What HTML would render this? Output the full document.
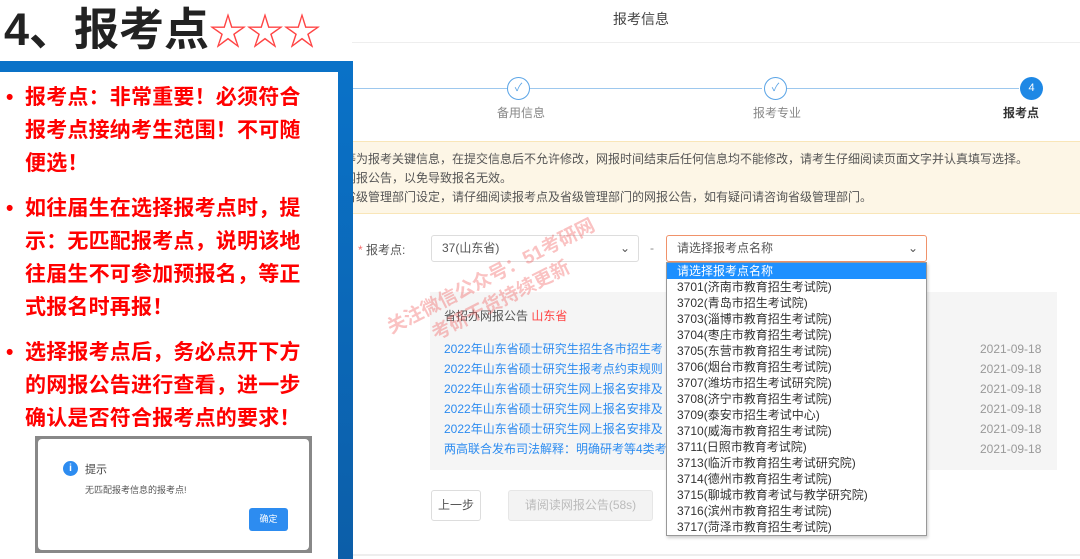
<!DOCTYPE html>
<html><head><meta charset="utf-8"><style>
*{margin:0;padding:0;box-sizing:border-box}
body{width:1080px;height:559px;overflow:hidden;background:#fff;position:relative;font-family:"Liberation Sans","Noto Sans CJK SC",sans-serif;color:#333}
.a{position:absolute;white-space:nowrap}
.f12{font-size:12px}
.red{color:#f00;font-weight:bold;font-size:21px;letter-spacing:0.2px;line-height:33px}
.dd div{height:16px;line-height:16px;padding-left:10px;font-size:12px;color:#333}
.lk{color:#2d8cf0;font-size:12px}
.dt{color:#999;font-size:12px}
</style></head><body>
<!-- right page -->
<div class="a" style="left:613px;top:9px;font-size:14px;color:#444">报考信息</div>
<div class="a" style="left:350px;top:42px;width:730px;height:1px;background:#eee"></div>
<div class="a" style="left:352px;top:88px;width:155px;height:1px;background:#9dc8ee"></div>
<div class="a" style="left:530px;top:88px;width:232px;height:1px;background:#9dc8ee"></div>
<div class="a" style="left:787px;top:88px;width:232px;height:1px;background:#9dc8ee"></div>
<div class="a" style="left:507px;top:77px;width:23px;height:23px;border:1px solid #5aa4e6;border-radius:50%;color:#5aa4e6;font-size:11px;text-align:center;line-height:21px">✓</div>
<div class="a" style="left:764px;top:77px;width:23px;height:23px;border:1px solid #5aa4e6;border-radius:50%;color:#5aa4e6;font-size:11px;text-align:center;line-height:21px">✓</div>
<div class="a" style="left:1020px;top:77px;width:23px;height:23px;background:#1e88e5;border-radius:50%;color:#fff;font-size:11px;text-align:center;line-height:23px">4</div>
<div class="a f12" style="left:497px;top:104px;color:#888">备用信息</div>
<div class="a f12" style="left:753px;top:104px;color:#888">报考专业</div>
<div class="a f12" style="left:1003px;top:104px;color:#333;font-weight:bold">报考点</div>
<div class="a" style="left:345px;top:141px;width:735px;height:73px;background:#fdf6e6;border-top:1px solid #f9e6b8;border-bottom:1px solid #f9e6b8"></div>
<div class="a f12" style="left:344px;top:150px;color:#555;line-height:19px">等为报考关键信息，在提交信息后不允许修改，网报时间结束后任何信息均不能修改，请考生仔细阅读页面文字并认真填写选择。<br>网报公告，以免导致报名无效。<br>省级管理部门设定，请仔细阅读报考点及省级管理部门的网报公告，如有疑问请咨询省级管理部门。</div>
<div class="a f12" style="left:358px;top:241px;color:#555"><span style="color:#f56c6c">*</span> 报考点:</div>
<div class="a f12" style="left:431px;top:235px;width:208px;height:27px;border:1px solid #ddd;border-radius:3px;padding-left:10px;line-height:25px;color:#555">37(山东省)<span style="position:absolute;right:8px;top:0">⌄</span></div>
<div class="a f12" style="left:650px;top:241px;color:#888">-</div>
<div class="a f12" style="left:666px;top:235px;width:261px;height:27px;border:1px solid #f0926a;border-radius:3px;padding-left:10px;line-height:25px;color:#555">请选择报考点名称<span style="position:absolute;right:8px;top:0">⌄</span></div>
<div class="a" style="left:430px;top:292px;width:627px;height:178px;background:#f5f5f5"></div>
<div class="a f12" style="left:444px;top:307px;color:#555">省招办网报公告 <span style="color:#f44">山东省</span></div>
<div class="a" style="left:444px;top:339px;line-height:20px">
<div class="lk">2022年山东省硕士研究生招生各市招生考</div>
<div class="lk">2022年山东省硕士研究生报考点约束规则</div>
<div class="lk">2022年山东省硕士研究生网上报名安排及</div>
<div class="lk">2022年山东省硕士研究生网上报名安排及</div>
<div class="lk">2022年山东省硕士研究生网上报名安排及</div>
<div class="lk">两高联合发布司法解释：明确研考等4类考</div></div>
<div class="a" style="left:980px;top:339px;line-height:20px">
<div class="dt">2021-09-18</div><div class="dt">2021-09-18</div><div class="dt">2021-09-18</div><div class="dt">2021-09-18</div><div class="dt">2021-09-18</div><div class="dt">2021-09-18</div></div>
<div class="a f12" style="left:431px;top:490px;width:50px;height:31px;border:1px solid #ddd;border-radius:3px;text-align:center;line-height:29px;color:#555;background:#fff">上一步</div>
<div class="a f12" style="left:508px;top:490px;width:145px;height:31px;border:1px solid #e6e6e6;border-radius:3px;text-align:center;line-height:29px;color:#bbb;background:#f3f3f3">请阅读网报公告(58s)</div>
<div class="a" style="left:350px;top:554px;width:730px;height:2px;background:#eee"></div>
<div class="a dd" style="left:666px;top:262px;width:261px;height:274px;background:#fff;border:1px solid #999;box-shadow:1px 2px 3px rgba(0,0,0,.2)">
<div style="background:#1e90ff;color:#fff">请选择报考点名称</div>
<div>3701(济南市教育招生考试院)</div><div>3702(青岛市招生考试院)</div><div>3703(淄博市教育招生考试院)</div><div>3704(枣庄市教育招生考试院)</div><div>3705(东营市教育招生考试院)</div><div>3706(烟台市教育招生考试院)</div><div>3707(潍坊市招生考试研究院)</div><div>3708(济宁市教育招生考试院)</div><div>3709(泰安市招生考试中心)</div><div>3710(威海市教育招生考试院)</div><div>3711(日照市教育考试院)</div><div>3713(临沂市教育招生考试研究院)</div><div>3714(德州市教育招生考试院)</div><div>3715(聊城市教育考试与教学研究院)</div><div>3716(滨州市教育招生考试院)</div><div>3717(菏泽市教育招生考试院)</div></div>
<div class="a" style="left:383px;top:318px;transform:rotate(-27deg);transform-origin:left top;color:rgba(240,80,80,.35);font-size:19px;font-weight:bold;line-height:26px">关注微信公众号：51考研网<br>&nbsp;&nbsp;&nbsp;&nbsp;&nbsp;&nbsp;&nbsp;考研干货持续更新</div>
<!-- left panel -->
<div class="a" style="left:0;top:0;width:352px;height:60px;background:#fff"></div>
<div class="a" style="left:4px;top:2px;font-size:45px;font-weight:bold;color:#222;line-height:56px">4、报考点<span style="color:#f44;font-weight:normal;font-size:38px;letter-spacing:-1px">☆☆☆</span></div>
<div class="a" style="left:0;top:61px;width:353px;height:498px;background:linear-gradient(#0a72c8,#0c5ea8)"></div>
<div class="a" style="left:0;top:72px;width:338px;height:487px;background:#fff"></div>
<div class="a" style="left:6px;top:81px;">
<div class="red" style="position:relative;padding-left:19px">
<span style="position:absolute;left:0">•</span>报考点：非常重要！必须符合<br>报考点接纳考生范围！不可随<br>便选！</div>
<div class="red" style="position:relative;padding-left:19px;margin-top:12px"><span style="position:absolute;left:0">•</span>如往届生在选择报考点时，提<br>示：无匹配报考点，说明该地<br>往届生不可参加预报名，等正<br>式报名时再报！</div>
<div class="red" style="position:relative;padding-left:19px;margin-top:12px"><span style="position:absolute;left:0">•</span>选择报考点后，务必点开下方<br>的网报公告进行查看，进一步<br>确认是否符合报考点的要求！</div></div>
<div class="a" style="left:35px;top:436px;width:277px;height:117px;background:#888;padding:3px">
<div style="width:100%;height:100%;background:#fff;border-radius:4px;position:relative">
<div class="a" style="left:25px;top:22px;width:15px;height:15px;border-radius:50%;background:#2d8cf0;color:#fff;font-size:10px;text-align:center;line-height:15px;font-weight:bold">i</div>
<div class="a" style="left:47px;top:22px;font-size:11px;color:#444">提示</div>
<div class="a" style="left:47px;top:44px;font-size:9px;color:#555">无匹配报考信息的报考点!</div>
<div class="a" style="left:211px;top:69px;width:39px;height:23px;background:#2d8cf0;border-radius:3px;color:#fff;font-size:9px;text-align:center;line-height:23px">确定</div>
</div></div>
</body></html>
